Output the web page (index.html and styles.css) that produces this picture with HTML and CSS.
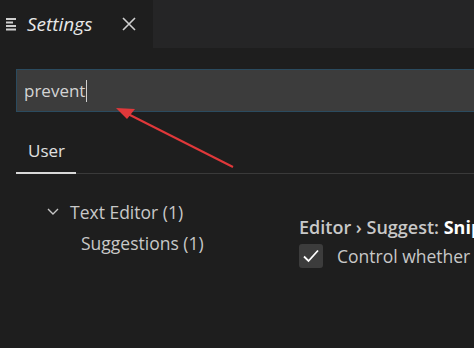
FILE: index.html
```html
<!DOCTYPE html>
<html lang="en">
<head>
  <meta charset="UTF-8" />
  <title>Settings</title>
  <link rel="stylesheet" href="styles.css">
</head>
<body>
  <div class="tabbar">
    <div class="tab">
      <svg class="tab-icon" width="12" height="14" viewBox="0 0 12 14">
        <rect x="0" y="1" width="10" height="2" fill="#cfcfcf"/>
        <rect x="0" y="4.5" width="7" height="2" fill="#cfcfcf"/>
        <rect x="0" y="8" width="10" height="2" fill="#cfcfcf"/>
        <rect x="0" y="11.5" width="10" height="2" fill="#cfcfcf"/>
      </svg>
      <span class="tab-title">Settings</span>
      <svg class="tab-close" width="14" height="14" viewBox="0 0 14 14">
        <path d="M1 1 L13 13 M13 1 L1 13" stroke="#d0d0d0" stroke-width="1.6"/>
      </svg>
    </div>
  </div>

  <div class="search">
    <span class="search-text">prevent</span><span class="caret"></span>
  </div>

  <div class="scope">
    <div class="scope-tab">User</div>
  </div>

  <div class="content">
    <div class="tree">
      <div class="tree-item">
        <svg class="chevron" width="12" height="8" viewBox="0 0 12 8">
          <path d="M1 1 L6 6 L11 1" stroke="#c5c5c5" stroke-width="1.4" fill="none"/>
        </svg>
        Text Editor (1)
      </div>
      <div class="tree-item sub">Suggestions (1)</div>
    </div>
    <div class="setting">
      <div class="setting-title">Editor › Suggest: <b>Snip</b></div>
      <div class="setting-row">
        <span class="checkbox">
          <svg width="18" height="16" viewBox="0 0 18 16">
            <path d="M2 8.5 L6.5 13 L16 2.5" stroke="#ffffff" stroke-width="1.8" fill="none"/>
          </svg>
        </span>
        <span class="setting-desc">Control whether</span>
      </div>
    </div>
  </div>

  <svg class="arrow" width="474" height="348" viewBox="0 0 474 348">
    <path d="M233 167 L128 114" stroke="#e0383a" stroke-width="2" fill="none"/>
    <path d="M116 108 L135 109 L127 119 Z" fill="#e0383a"/>
  </svg>
</body>
</html>
```

FILE: styles.css
```css
body {
  margin: 0;
  background-color: #1e1e1e;
  font-family: 'Open Sans', 'Noto Sans', sans-serif;
  color: #cccccc;
  width: 474px;
  height: 348px;
  overflow: hidden;
  position: relative;
}
.tabbar {
  height: 48px;
  background-color: #252526;
  display: flex;
}
.tab {
  width: 153px;
  background-color: #1e1e1e;
  display: flex;
  align-items: center;
  padding-left: 6px;
  box-sizing: border-box;
}
.tab-icon {
  margin-right: 9px;
}
.tab-title {
  font-style: italic;
  font-size: 19px;
  color: #e8e8e8;
  width: 95px;
}
.search {
  margin: 21px 0 0 16px;
  width: 500px;
  height: 43px;
  box-sizing: border-box;
  background-color: #3c3c3c;
  border: 1px solid #2b4b5f;
  display: flex;
  align-items: center;
  padding-left: 7px;
}
.search-text {
  font-size: 17px;
  color: #d4d4d4;
}
.caret {
  width: 1px;
  height: 22px;
  background-color: #d0d0d0;
  margin-left: 1px;
}
.scope {
  margin: 27px 0 0 16px;
  border-bottom: 1px solid #3a3a3a;
  display: flex;
}
.scope-tab {
  width: 60px;
  padding: 0 0 10px 12px;
  box-sizing: border-box;
  font-size: 17px;
  color: #e0e0e0;
  border-bottom: 2px solid #d8d8d8;
  margin-bottom: -1px;
}
.content {
  display: flex;
  margin-top: 22px;
}
.tree {
  flex-shrink: 0;
  width: 299px;
  padding-left: 47px;
  box-sizing: border-box;
}
.tree-item {
  font-size: 17.5px;
  color: #c8c8c8;
  height: 31px;
  display: flex;
  align-items: center;
  white-space: nowrap;
}
.chevron {
  margin-right: 11px;
}
.tree-item.sub {
  padding-left: 34px;
}
.setting {
  padding-top: 19px;
  white-space: nowrap;
}
.setting-title {
  font-size: 18px;
  font-weight: 600;
  color: #c8c8c8;
}
.setting-title b {
  color: #ffffff;
  font-weight: 700;
}
.setting-row {
  display: flex;
  align-items: center;
  margin-top: 5px;
}
.checkbox {
  width: 24px;
  height: 24px;
  background-color: #3c3c3c;
  border-radius: 3px;
  display: flex;
  align-items: center;
  justify-content: center;
  margin-right: 14px;
}
.setting-desc {
  font-size: 17.5px;
  color: #c8c8c8;
}
.arrow {
  position: absolute;
  left: 0;
  top: 0;
  pointer-events: none;
}
```
